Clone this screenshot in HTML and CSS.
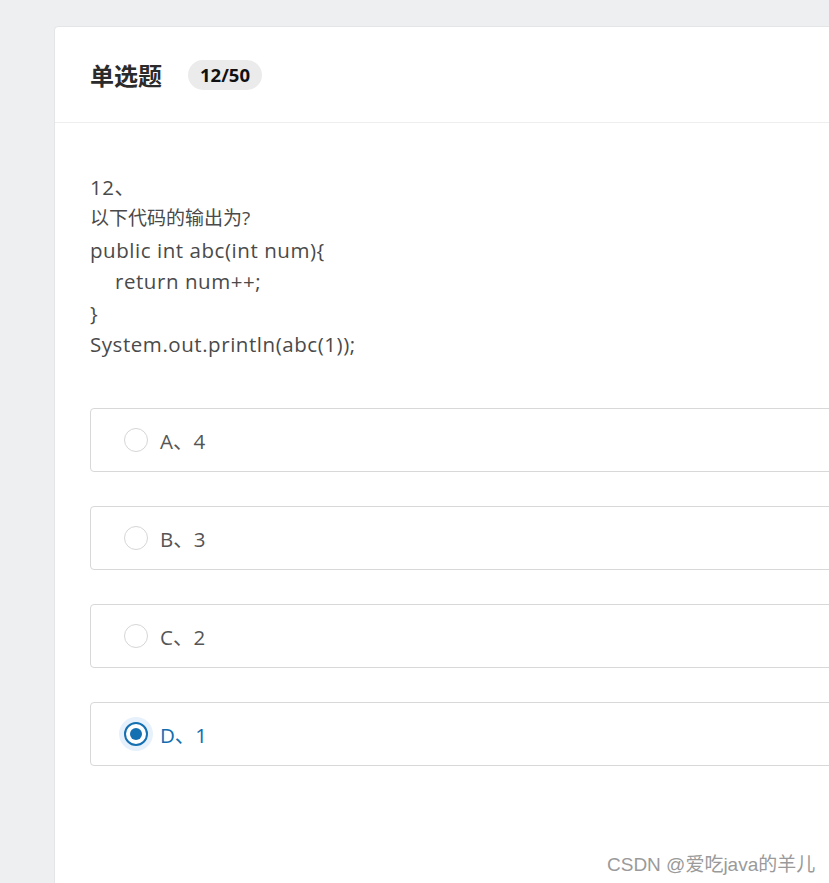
FILE: index.html
```html
<!DOCTYPE html>
<html lang="zh-CN">

<head>
    <meta charset="UTF-8">
    <meta name="viewport" content="width=device-width, initial-scale=1.0">
    <title>单选题</title>
    <link rel="stylesheet" href="styles.css">
</head>

<body>
    <div class="card">
        <header class="cardHead">
            <h2>单选题</h2>
            <span class="badge">12/50</span>
        </header>

        <main class="cardBody">
            <div class="question">
                <p class="code">12、</p>
                <p>以下代码的输出为?</p>
                <p class="code">public int abc(int num){</p>
                <p class="code indent">return num++;</p>
                <p class="code">}</p>
                <p class="code">System.out.println(abc(1));</p>
            </div>

            <ul class="options">
                <li class="option"><span class="radio"></span><span>A、4</span></li>
                <li class="option"><span class="radio"></span><span>B、3</span></li>
                <li class="option"><span class="radio"></span><span>C、2</span></li>
                <li class="option checked"><span class="radio"></span><span>D、1</span></li>
            </ul>
        </main>
    </div>

    <div class="mark">CSDN @爱吃java的羊儿</div>
</body>

</html>
```

FILE: styles.css
```css
* {
    font-family: "Open Sans", "Noto Sans CJK SC", sans-serif;
    padding: 0px;
    box-sizing: border-box;
    margin: 0px;
}

html,
body {
    overflow: hidden;
}

body {
    width: 829px;
    height: 883px;
    background-color: #eeeff1;
    padding: 26px 0 0 54px;
    position: relative;
}

.card {
    width: 1000px;
    height: 900px;
    background-color: #fff;
    border: 1px solid #e4e5e7;
    border-radius: 4px;
}

.cardHead {
    display: flex;
    align-items: center;
    height: 96px;
    padding-left: 35px;
    border-bottom: 1px solid #eeeeee;
}

.cardHead h2 {
    font-size: 24px;
    font-weight: bold;
    color: #2b2b2b;
}

.badge {
    margin-left: 26px;
    height: 30px;
    padding: 0 12px;
    border-radius: 15px;
    background-color: #ebebeb;
    color: #111;
    font-size: 18.5px;
    font-weight: bold;
    line-height: 30px;
}

.cardBody {
    padding: 49px 0 0 35px;
}

.question {
    color: #4a4a4a;
    font-size: 19px;
    line-height: 31.4px;
}

.code {
    font-size: 20.5px;
    letter-spacing: 0.55px;
}

.indent {
    padding-left: 25px;
}

.options {
    list-style: none;
    margin-top: 48px;
    display: flex;
    flex-direction: column;
    gap: 34px;
}

.option {
    display: flex;
    align-items: center;
    gap: 12px;
    height: 64px;
    padding-left: 33px;
    border: 1px solid #d8d8d8;
    border-radius: 4px;
    color: #555;
    font-size: 20.5px;
}

.radio {
    width: 24px;
    height: 24px;
    border: 1px solid #d6d6d6;
    border-radius: 50%;
    background-color: #fff;
}

.checked {
    color: #0f6db0;
}

.checked .radio {
    border: 2px solid #1570b2;
    box-shadow: 0 0 0 5px #e6f1fb;
    display: flex;
    align-items: center;
    justify-content: center;
}

.checked .radio::after {
    content: "";
    width: 12px;
    height: 12px;
    border-radius: 50%;
    background-color: #1570b2;
}

.mark {
    position: absolute;
    left: 607px;
    top: 849px;
    color: #9a9a9a;
    font-family: "Liberation Sans", "Noto Sans CJK SC", sans-serif;
    font-size: 19px;
    text-shadow: 0 0 2px #fff;
}
```
